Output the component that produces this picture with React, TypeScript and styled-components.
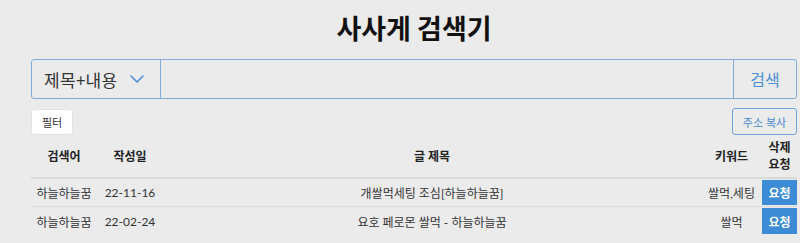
import React from 'react';
import styled, { createGlobalStyle } from 'styled-components';

const GlobalStyle = createGlobalStyle`
  body {
    margin: 0;
    background: #ebebeb;
    font-family: Lato, "Noto Sans CJK KR", sans-serif;
    color: #333;
  }
`;

interface Post {
  keyword: string;
  date: string;
  title: string;
  tags: string;
}

const POSTS: Post[] = [
  { keyword: '하늘하늘꿈', date: '22-11-16', title: '개쌀먹세팅 조심[하늘하늘꿈]', tags: '쌀먹,세팅' },
  { keyword: '하늘하늘꿈', date: '22-02-24', title: '요호 페로몬 쌀먹 - 하늘하늘꿈', tags: '쌀먹' },
];

const Chevron = () => (
  <svg width="14" height="8" viewBox="0 0 14 8" fill="none">
    <path d="M1 1l6 6 6-6" stroke="#4a8fd8" strokeWidth="1.6" strokeLinecap="round" strokeLinejoin="round" />
  </svg>
);

export default function App() {
  return (
    <>
      <GlobalStyle />
      <Page>
        <Title>사사게 검색기</Title>
        <SearchBar>
          <Select>
            <span>제목+내용</span>
            <Chevron />
          </Select>
          <Input />
          <SearchButton>검색</SearchButton>
        </SearchBar>
        <Toolbar>
          <FilterButton>필터</FilterButton>
          <CopyButton>주소 복사</CopyButton>
        </Toolbar>
        <Table>
          <HeadRow>
            <HeadCell>검색어</HeadCell>
            <HeadCell>작성일</HeadCell>
            <HeadCell>글 제목</HeadCell>
            <HeadCell>키워드</HeadCell>
            <HeadCell>
              삭제
              <br />
              요청
            </HeadCell>
          </HeadRow>
          {POSTS.map((p, i) => (
            <Row key={i} last={i === POSTS.length - 1}>
              <Cell>{p.keyword}</Cell>
              <Cell>{p.date}</Cell>
              <Cell>{p.title}</Cell>
              <Cell>{p.tags}</Cell>
              <RequestCell>
                <RequestButton>요청</RequestButton>
              </RequestCell>
            </Row>
          ))}
        </Table>
      </Page>
    </>
  );
}

const Page = styled.div`
  padding: 0 3px 0 31px;
`;

const Title = styled.h1`
  margin: 0;
  height: 55px;
  padding-bottom: 4px;
  display: flex;
  align-items: center;
  justify-content: center;
  font-family: "Noto Sans CJK KR", sans-serif;
  font-size: 27px;
  font-weight: 700;
  color: #111;
`;

const SearchBar = styled.div`
  display: flex;
  height: 40px;
  box-sizing: border-box;
  border: 1px solid #80acd9;
  border-radius: 3px;
`;

const Select = styled.div`
  width: 129px;
  box-sizing: border-box;
  border-right: 1px solid #80acd9;
  display: flex;
  align-items: center;
  gap: 12px;
  padding-left: 12px;
  font-size: 17px;
  letter-spacing: 0.3px;
  color: #333;
  font-family: "Noto Sans CJK KR", sans-serif;
`;

const Input = styled.div`
  flex: 1;
`;

const SearchButton = styled.div`
  width: 63px;
  box-sizing: border-box;
  border-left: 1px solid #80acd9;
  display: flex;
  align-items: center;
  justify-content: center;
  font-size: 16px;
  color: #4a8fd8;
  font-family: "Noto Sans CJK KR", sans-serif;
`;

const Toolbar = styled.div`
  display: flex;
  justify-content: space-between;
  align-items: center;
  margin-top: 9px;
`;

const FilterButton = styled.div`
  width: 42px;
  height: 26px;
  box-sizing: border-box;
  background: #fff;
  border: 1px solid #e2e2e2;
  border-radius: 3px;
  display: flex;
  align-items: center;
  justify-content: center;
  font-size: 11px;
  color: #333;
`;

const CopyButton = styled.div`
  width: 65px;
  height: 27px;
  box-sizing: border-box;
  border: 1px solid #6ea3dc;
  border-radius: 3px;
  display: flex;
  align-items: center;
  justify-content: center;
  font-size: 11px;
  color: #4a8ad4;
`;

const Table = styled.div`
  display: grid;
  grid-template-columns: 66px 66px 1fr 61px 35px;
`;

const HeadRow = styled.div`
  display: contents;
`;

const HeadCell = styled.div`
  height: 44px;
  box-sizing: border-box;
  border-bottom: 2px solid #d9d9d9;
  display: flex;
  align-items: center;
  justify-content: center;
  text-align: center;
  font-size: 12px;
  font-weight: 700;
  line-height: 17px;
  color: #222;
`;

const Row = styled.div<{ last: boolean }>`
  display: contents;
  & > div {
    border-bottom: ${p => (p.last ? 'none' : '1px solid #dcdcdc')};
  }
`;

const Cell = styled.div`
  height: 28px;
  box-sizing: border-box;
  display: flex;
  align-items: center;
  justify-content: center;
  font-size: 12px;
  color: #333;
  white-space: nowrap;
`;

const RequestCell = styled.div`
  height: 28px;
  box-sizing: border-box;
  padding: 1px 0;
  display: flex;
`;

const RequestButton = styled.div`
  flex: 1;
  background: #3c8dd6;
  color: #fff;
  font-size: 12px;
  font-weight: 700;
  display: flex;
  align-items: center;
  justify-content: center;
`;
